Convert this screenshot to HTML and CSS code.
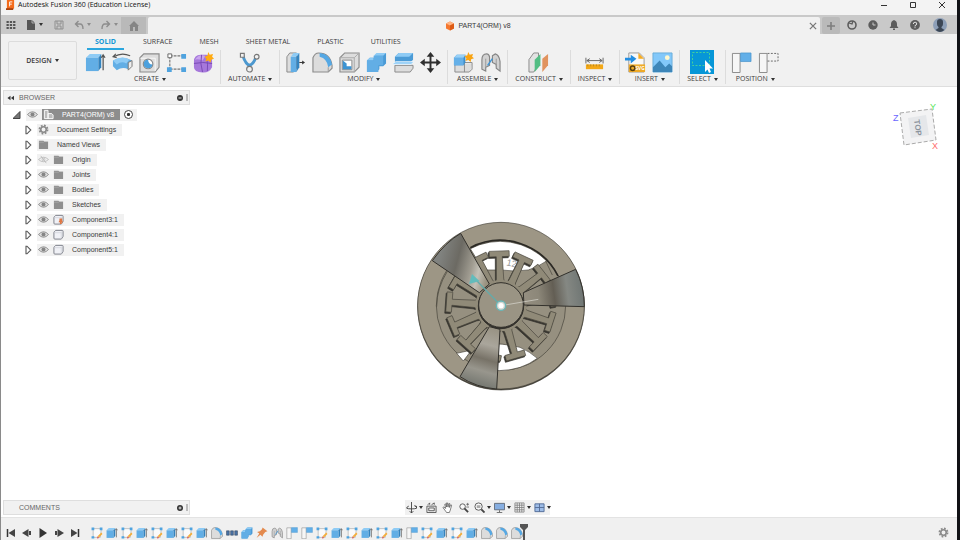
FILE: index.html
```
<!DOCTYPE html>
<html lang="en">
<head>
	<meta charset="utf-8">
	<title>Autodesk Fusion 360 (Education License)</title>
	<link rel="stylesheet" href="styles.css">
</head>
<body>
	<!-- shared icons -->
	<svg class="sprite" aria-hidden="true">
		<defs>
			<symbol id="i-extrude" viewBox="0 0 22 22">
				<path d="M1 6l4-4h12l-3 4z" fill="#8ecbf5"/><path d="M1 6h13v14H1z" fill="#62aee5"/><path d="M14 6l3-4v14l-3 4z" fill="#3484bf"/>
				<path d="M19 19V4M17 6l2-3 2 3" fill="none" stroke="#555" stroke-width="1.3"/>
			</symbol>
			<symbol id="i-revolve" viewBox="0 0 22 22">
				<path d="M1 9q10-6 20 0l-4 9q-6-3-12 1l-4-4z" fill="#62aee5"/><path d="M1 9q10-6 17-1l-3 4q-5-3-10 1z" fill="#8ecbf5"/>
				<path d="M17 11l4-2v6l-4 4z" fill="#eee" stroke="#777"/><path d="M2 5q8-5 17-1M4 2L1 5l4 1" fill="none" stroke="#555" stroke-width="1.2"/>
			</symbol>
			<symbol id="i-hole" viewBox="0 0 22 22">
				<path d="M1 6l4-4h16v14l-4 5H1z" fill="#ddd" stroke="#8b8b8b" stroke-width="1.2"/><path d="M1.500 6.500H17V20" fill="none" stroke="#fafafa"/>
				<circle cx="9.500" cy="12.500" r="5" fill="#fff" stroke="#888" stroke-width="1.200"/><path d="M9.500 8a4.500 4.500 0 1 0 4.500 5q-4 0-4.500-5z" fill="#4ba0dd"/>
			</symbol>
			<symbol id="i-pattern" viewBox="0 0 22 22">
				<path d="M4 4h14M4 4v14M4 18h14" stroke="#777" stroke-width="1.2" stroke-dasharray="3 1"/>
				<path d="M2 2h4v4H2z" fill="#fff" stroke="#666"/><path d="M16 2h5v5h-5zM1 16h5v5H1zM16 16h5v5h-5z" fill="#4fa3df"/>
			</symbol>
			<symbol id="i-form" viewBox="0 0 22 22">
				<path d="M1 10q0-7 7-7h6q6 1 6 7v6q-3 6-10 5.500Q1 21 1 16z" fill="#a678db"/><path d="M2 8q4-6 11-4l-3 5q-5-2-8-1z" fill="#c9a5ee"/>
				<path d="M1 12q9-2 19 0M9 3q-2 9 1 18M14 5q2 8 1 15" stroke="#7849b5" fill="none"/>
				<path d="M16 0l1.500 3 3.500-1-1 3 2 2-3 1-.5 3-2.500-2-3 1 1-3-2-2 3-1z" fill="#ffab12"/>
			</symbol>
			<symbol id="i-auto" viewBox="0 0 22 22">
				<path d="M4 4q3 9 7 10q5-2 7-10M11 12v6" fill="none" stroke="#4c98cf" stroke-width="3"/>
				<g fill="#f1f1f1" stroke="#777" stroke-width="1.200"><path d="M1.500 1.500h4v4h-4z"/><circle cx="18.500" cy="5" r="2.500"/><circle cx="11" cy="18" r="3"/></g>
			</symbol>
			<symbol id="i-press" viewBox="0 0 22 22">
				<path d="M2 5l3-4h7v16l-3 4H2z" fill="#ddd" stroke="#888"/><path d="M6 5h6v16H6z" fill="#62aee5"/><path d="M6 5l3-4h6l-3 4z" fill="#8ecbf5"/><path d="M12 5l3-4v15l-3 5z" fill="#3484bf"/>
				<path d="M15 11h4" stroke="#333"/><path d="M18 9l3 2-3 2z" fill="#333"/>
			</symbol>
			<symbol id="i-fillet" viewBox="0 0 22 22">
				<path d="M1 6q2-5 6-5 12 0 14 13v3l-4 4H1z" fill="#dcdcdc" stroke="#8b8b8b" stroke-width="1.200"/>
				<path d="M8 1q11 1 13 12l-4 3Q16 7 8 5z" fill="#55a8e4"/><path d="M17 16v5" stroke="#999"/>
			</symbol>
			<symbol id="i-shell" viewBox="0 0 22 22">
				<path d="M1 6l5-5h15v15l-5 5H1z" fill="#ddd" stroke="#8b8b8b" stroke-width="1.200"/><path d="M16 6v15M16 6l5-5M1 6h15" stroke="#aaa"/>
				<path d="M3.500 8.500h10v10h-10z" fill="#fff" stroke="#888"/><path d="M4 9l4 3v3h5v3H4z" fill="#3e94d2"/>
			</symbol>
			<symbol id="i-combine" viewBox="0 0 22 22">
				<path d="M1 9l3-3h5V4l3-3h9v11l-3 3h-4v3l-3 3H1z" fill="#4b9bd6"/><path d="M8 4l3-3h10l-3 3zM1 9l3-3h4v3z" fill="#8ecbf5"/><path d="M8 4h10v10h-5v7H1V9h7z" fill="#62aee5"/>
			</symbol>
			<symbol id="i-split" viewBox="0 0 22 22">
				<path d="M2 5l4-4h15v7l-3 3H2z" fill="#4b9bd6"/><path d="M2 5l4-4h15l-4 4z" fill="#8ecbf5"/><path d="M2 14h19v3l-3 4H2z" fill="#ddd" stroke="#888"/>
				<path d="M0 12l3-2h19l-3 3H0z" fill="#9bd2f8" stroke="#fff" stroke-width=".6"/>
			</symbol>
			<symbol id="i-move" viewBox="0 0 22 22">
				<path d="M11 3v16M3 11h16" stroke="#2f2f2f" stroke-width="2"/><path d="M11 0l4 5H7zM11 22l4-5H7zM0 11l5-4v8zM22 11l-5-4v8z" fill="#2f2f2f"/>
			</symbol>
			<symbol id="i-newcomp" viewBox="0 0 22 22">
				<path d="M2 12h18l-2 9H2z" fill="#ddd"/><path d="M2 12v9h15l3-3v-7h-8v10" stroke="#8b8b8b" fill="none"/>
				<path d="M1 6l3-3h9v8l-2 3H1z" fill="#3e8dca"/><path d="M1 6h10v8H1z" fill="#65b0e8"/><path d="M1 6l3-3h9l-2 3z" fill="#98d1f8"/>
				<path d="M16 0l1.500 3 3.500-1-1 3 2 1.500-3 1-.5 3-2.500-2-3 1 1-3-2-2 3-1z" fill="#f8a414"/>
			</symbol>
			<symbol id="i-joint" viewBox="0 0 22 22">
				<path d="M2 8q0-6 5-6 2 0 3 3v9l-4 2v4l-4-2zM13 4l3-2q4 1 5 8v10l-4-3v-4l-4-2z" fill="#d2d2d2" stroke="#858585" stroke-width="1.200"/>
				<path d="M6 7v9M17 7v8" stroke="#999"/><path d="M8 14l5-7" stroke="#3f97d8" stroke-width="1.500"/>
			</symbol>
			<symbol id="i-plane" viewBox="0 0 22 22">
				<path d="M1 8l5-7h5v12l-5 8H1z" fill="#e2e2e2" stroke="#888"/><path d="M7 8l6-6v12l-6 7z" fill="#52bd83"/><path d="M15 7l6-5v12l-6 7z" fill="#e1935e"/>
			</symbol>
			<symbol id="i-measure" viewBox="0 0 22 22">
				<path d="M2 6v6M20 6v6M3 9h16M6 7L3 9l3 2M16 7l3 2-3 2" fill="none" stroke="#666"/><path d="M2 13h18v5H2z" fill="#f3a817"/><path d="M4 13v2M7 13v2M10 13v2M13 13v2M16 13v2" stroke="#b98820"/>
			</symbol>
			<symbol id="i-svg" viewBox="0 0 22 22">
				<path d="M4 1h11l5 5v15H4z" fill="#f8f8f8" stroke="#999"/><path d="M14 1l6 6h-6z" fill="#f4ab22"/><path d="M4 13h17v8H4z" fill="#efaa28"/>
				<circle cx="8" cy="17" r="2.300" fill="none" stroke="#57400f" stroke-width="1.500"/><text x="11" y="19" font-size="5" font-weight="700" fill="#fff">SVG</text>
				<path d="M0 6h6V3l6 4-6 5V9H0z" fill="#238ee2"/>
			</symbol>
			<symbol id="i-image" viewBox="0 0 22 22">
				<path d="M1 1h20v20H1z" fill="#83c8fa" stroke="#69aeda"/><path d="M1 16l7-7 6 7 4-4 3 3v6H1z" fill="#3d86b9"/><circle cx="16" cy="6" r="2.500" fill="#fff8cf"/>
			</symbol>
			<symbol id="i-select" viewBox="0 0 24 24">
				<path d="M0 0h24v24H0z" fill="#0696d7"/><path d="M2.500 2.500h17v13h-17z" fill="none" stroke="#43cf9c" stroke-dasharray="2 1.500"/><path d="M15 10v12l2.500-2.500L19 23l2-1-1.500-3.500H23z" fill="#fff"/>
			</symbol>
			<symbol id="i-capture" viewBox="0 0 22 22">
				<path d="M1.500 1.500h8v20h-8z" fill="#f6f6f6" stroke="#888"/><path d="M10 1h11v9H10z" fill="#62afe8" stroke="#4592ca" stroke-width=".7"/>
			</symbol>
			<symbol id="i-revert" viewBox="0 0 22 22">
				<path d="M1.500 1.500h8v20h-8z" fill="#f6f6f6" stroke="#888"/><path d="M10 1.500h11v8H10" fill="none" stroke="#666" stroke-dasharray="2 1.500"/>
			</symbol>
			<symbol id="i-sketch" viewBox="0 0 22 22">
				<path d="M4 3h15l-2 16H4z" fill="#fafafa" stroke="#999"/><path d="M1 1h5v5H1zM16 1h5v5h-5zM1 17h5v4H1z" fill="#4fa3df"/>
				<path d="M12 17l7-7 2 3-6 6z" fill="#f5ae3a"/><path d="M12 17l3 3-4 1z" fill="#d95650"/>
			</symbol>
			<symbol id="i-rect" viewBox="0 0 22 22">
				<path d="M1 7h5v8H1zM8.500 7h5v8h-5zM16 7h5v8h-5z" fill="#4a73a5" stroke="#33445c"/>
			</symbol>
			<symbol id="i-pin" viewBox="0 0 22 22">
				<path d="M12 1l9 7-4 1-4 5-1 4-4-4-7 6 5-8-4-3 5-1 4-4z" fill="#e38a4e"/>
			</symbol>
			<symbol id="i-eye" viewBox="0 0 12 12">
				<path d="M.5 6Q6 0 11.500 6 6 12 .5 6z" fill="#e0e0e0" stroke="#8c8c8c"/><circle cx="6" cy="6" r="2.200" fill="#858585"/>
			</symbol>
			<symbol id="i-eyeoff" viewBox="0 0 12 12">
				<path d="M.5 6Q6 1 11.500 6 6 11 .5 6zM3 2l6 8" fill="none" stroke="#bdbdbd"/><circle cx="6" cy="6" r="1.500" fill="none" stroke="#bdbdbd"/>
			</symbol>
			<symbol id="i-folder" viewBox="0 0 12 12">
				<path d="M1 2h5l1 1h4v8H1z" fill="#8e8e8e"/><path d="M1 3.500h5l1-.7h4" stroke="#b9b9b9" stroke-width=".6" fill="none"/>
			</symbol>
			<symbol id="i-gear" viewBox="0 0 12 12">
				<circle cx="6" cy="6" r="4.400" fill="none" stroke="#8b8b8b" stroke-width="2" stroke-dasharray="1.900 1.550"/><circle cx="6" cy="6" r="3" fill="none" stroke="#8b8b8b" stroke-width="1.800"/>
			</symbol>
			<symbol id="i-box" viewBox="0 0 12 12">
				<path d="M1 4q0-1 2-2.500h7q1 0 1 1V8q-1 2-2 3H2q-1 0-1-1z" fill="#f0f1f6" stroke="#777b84"/><path d="M9 10.500V4l1.500-2M1.500 4H9" stroke="#c9cbd2" stroke-width=".7" fill="none"/>
			</symbol>
			<symbol id="i-arrow" viewBox="0 0 8 10">
				<path d="M2 1.200h1L6.800 5 3 8.800H2z" fill="#fff" stroke="#555" stroke-width="1.100"/>
			</symbol>
		</defs>
	</svg>

	<header class="titlebar">
		<svg class="app-logo" viewBox="0 0 10 12"><path d="M1 0h8v9l-1 1H1z" fill="#f36b1c"/><path d="M0 9h8v2H0z" fill="#a54210"/><path d="M4 7V2h3M4 4.500h2.500" stroke="#fff" fill="none"/></svg>
		<span class="app-name">Autodesk Fusion 360 (Education License)</span>
		<button class="win" aria-label="Minimize"><svg viewBox="0 0 8 8"><path d="M1 4.500h6" stroke="#333"/></svg></button>
		<button class="win" aria-label="Maximize"><svg viewBox="0 0 8 8"><path d="M1.500 1.500h5v5h-5z" fill="none" stroke="#333"/></svg></button>
		<button class="win" aria-label="Close"><svg viewBox="0 0 8 8"><path d="M1 1l6 6M7 1L1 7" stroke="#333"/></svg></button>
	</header>

	<div class="tabstrip">
		<div class="quick">
			<button aria-label="Data panel"><svg viewBox="0 0 10 10"><path d="M.5 2h9M.5 5h9M.5 8h9" stroke="#555" stroke-width="2" stroke-dasharray="2.300 1"/></svg></button>
			<button class="drop" aria-label="File"><svg viewBox="0 0 10 10"><path d="M1 0h5l3 3v7H1z" fill="#555"/><path d="M6 0v3h3" stroke="#ccc" stroke-width=".7" fill="none"/></svg></button>
			<button aria-label="Save"><svg viewBox="0 0 10 10"><path d="M1 1h8v8H1zM3 1v3h4V1M3 9V6h4v3" fill="none" stroke="#8f8f8f" stroke-width="1"/></svg></button>
			<button class="drop faded" aria-label="Undo"><svg viewBox="0 0 10 10"><path d="M2 4h4q3 0 3 5M4.500 1L1.500 4l3 3" fill="none" stroke="#8d8d8d" stroke-width="1.400"/></svg></button>
			<button class="drop faded" aria-label="Redo"><svg viewBox="0 0 10 10"><path d="M8 4H4Q1 4 1 9M5.500 1l3 3-3 3" fill="none" stroke="#8d8d8d" stroke-width="1.400"/></svg></button>
		</div>
		<button class="home" aria-label="Home"><svg viewBox="0 0 10 10"><path d="M5 0l5 5H9v5H6V6H4v4H1V5H0z" fill="#858585"/></svg></button>
		<div class="doc-tab">
			<span class="doc-name">
				<svg viewBox="0 0 10 10"><path d="M1 2.500L5 .5l4 2v5l-4 2-4-2z" fill="#f5772f"/><path d="M1 2.500L5 .5l4 2-4 2z" fill="#ffb585"/><path d="M5 4.500l4-2v5l-4 2z" fill="#dd5b16"/></svg>
				PART4(ORM) v8
			</span>
			<button class="close" aria-label="Close tab"><svg viewBox="0 0 8 8"><path d="M1.500 1.500l5 5M6.500 1.500l-5 5" stroke="#777"/></svg></button>
		</div>
		<button class="new-tab" aria-label="New tab"><svg viewBox="0 0 10 10"><path d="M5 1v8M1 5h8" stroke="#7d7d7d" stroke-width="1.600"/></svg></button>
		<div class="account">
			<button aria-label="Extensions"><svg viewBox="0 0 10 10"><circle cx="5" cy="5" r="4" fill="none" stroke="#5c5c5c" stroke-width="1.600"/><path d="M2 3l3 1 1-3" stroke="#5c5c5c" fill="none" stroke-width="1.300"/></svg></button>
			<button aria-label="Job status"><svg viewBox="0 0 10 10"><circle cx="5" cy="5" r="4.700" fill="#5c5c5c"/><path d="M5 2.500V5h2.500" stroke="#ccc" fill="none"/></svg></button>
			<button aria-label="Notifications"><svg viewBox="0 0 10 10"><path d="M5 0q3 1 3 4v2l1.500 2h-9L2 6V4q0-3 3-4zM4 8.500h2V10H4z" fill="#5c5c5c"/></svg></button>
			<button aria-label="Help"><svg viewBox="0 0 10 10"><circle cx="5" cy="5" r="4.900" fill="#5c5c5c"/><path d="M3.300 4q0-1.800 1.800-1.800T6.700 4Q6.700 5 5 5.600V6.500M5 7.200v1" stroke="#e4e4e4" fill="none"/></svg></button>
			<button class="avatar" aria-label="Profile"><svg viewBox="0 0 14 14"><circle cx="7" cy="7" r="7" fill="#8d9fb8"/><path d="M4 4q0-3 3-3t3 3v2q0 2-1.500 3v1l3 2Q9 14 7 14t-4.500-2l3-2V9Q4 8 4 6z" fill="#3c4756"/></svg></button>
		</div>
	</div>

	<div class="ribbon">
		<button class="workspace caret">DESIGN</button>
		<div class="ribbon-main">
			<nav class="ribbon-tabs">
				<button class="active">SOLID</button>
				<button>SURFACE</button>
				<button>MESH</button>
				<button>SHEET METAL</button>
				<button>PLASTIC</button>
				<button>UTILITIES</button>
			</nav>
			<div class="groups">
				<section class="group">
					<div class="tools">
						<button aria-label="Extrude"><svg><use href="#i-extrude"/></svg></button>
						<button aria-label="Revolve"><svg><use href="#i-revolve"/></svg></button>
						<button aria-label="Hole"><svg><use href="#i-hole"/></svg></button>
						<button aria-label="Pattern"><svg><use href="#i-pattern"/></svg></button>
						<button aria-label="Create form"><svg><use href="#i-form"/></svg></button>
					</div>
					<button class="group-name caret">CREATE</button>
				</section>
				<section class="group">
					<div class="tools">
						<button aria-label="Automated modeling"><svg><use href="#i-auto"/></svg></button>
					</div>
					<button class="group-name caret">AUTOMATE</button>
				</section>
				<section class="group">
					<div class="tools">
						<button aria-label="Press pull"><svg><use href="#i-press"/></svg></button>
						<button aria-label="Fillet"><svg><use href="#i-fillet"/></svg></button>
						<button aria-label="Shell"><svg><use href="#i-shell"/></svg></button>
						<button aria-label="Combine"><svg><use href="#i-combine"/></svg></button>
						<button aria-label="Split body"><svg><use href="#i-split"/></svg></button>
						<button aria-label="Move"><svg><use href="#i-move"/></svg></button>
					</div>
					<button class="group-name caret">MODIFY</button>
				</section>
				<section class="group">
					<div class="tools">
						<button aria-label="New component"><svg><use href="#i-newcomp"/></svg></button>
						<button aria-label="Joint"><svg><use href="#i-joint"/></svg></button>
					</div>
					<button class="group-name caret">ASSEMBLE</button>
				</section>
				<section class="group">
					<div class="tools">
						<button aria-label="Offset plane"><svg><use href="#i-plane"/></svg></button>
					</div>
					<button class="group-name caret">CONSTRUCT</button>
				</section>
				<section class="group">
					<div class="tools">
						<button aria-label="Measure"><svg><use href="#i-measure"/></svg></button>
					</div>
					<button class="group-name caret">INSPECT</button>
				</section>
				<section class="group">
					<div class="tools">
						<button aria-label="Insert SVG"><svg><use href="#i-svg"/></svg></button>
						<button aria-label="Canvas"><svg><use href="#i-image"/></svg></button>
					</div>
					<button class="group-name caret">INSERT</button>
				</section>
				<section class="group">
					<div class="tools">
						<button class="selected" aria-label="Select"><svg><use href="#i-select"/></svg></button>
					</div>
					<button class="group-name caret">SELECT</button>
				</section>
				<section class="group">
					<div class="tools">
						<button aria-label="Capture position"><svg><use href="#i-capture"/></svg></button>
						<button aria-label="Revert position"><svg><use href="#i-revert"/></svg></button>
					</div>
					<button class="group-name caret">POSITION</button>
				</section>
			</div>
		</div>
	</div>

	<main class="canvas">
		<aside class="browser">
			<div class="panel-head">
				<svg class="collapse" viewBox="0 0 8 8"><path d="M4 1.500v5L.5 4zM8 1.500v5L4.500 4z" fill="#333"/></svg>
				<span>BROWSER</span>
				<svg class="dot" viewBox="0 0 8 8"><circle cx="4" cy="4" r="3" fill="#333"/><path d="M2.500 4h3" stroke="#fff" stroke-width=".8"/></svg>
				<i class="grip"></i>
			</div>
			<ul class="tree">
				<li class="root">
					<button class="toggle" aria-label="Collapse"><svg viewBox="0 0 8 10"><path d="M7 1.500v7H0z" fill="#777" stroke="#444"/></svg></button>
					<div class="node">
						<svg><use href="#i-eye"/></svg>
						<span class="current">
							<svg viewBox="0 0 12 12"><path d="M1.500 1.500h4v9h-4zM5.500 5h4l1.500 1.500v4H5.500z" fill="#bbb" stroke="#fff"/></svg>
							PART4(ORM) v8
						</span>
						<input type="radio" checked aria-label="Activate PART4(ORM) v8">
					</div>
				</li>
				<li><button class="toggle" aria-label="Expand"><svg><use href="#i-arrow"/></svg></button><div class="node"><svg><use href="#i-gear"/></svg><span>Document Settings</span></div></li>
				<li><button class="toggle" aria-label="Expand"><svg><use href="#i-arrow"/></svg></button><div class="node"><svg><use href="#i-folder"/></svg><span>Named Views</span></div></li>
				<li><button class="toggle" aria-label="Expand"><svg><use href="#i-arrow"/></svg></button><div class="node"><svg><use href="#i-eyeoff"/></svg><svg><use href="#i-folder"/></svg><span>Origin</span></div></li>
				<li><button class="toggle" aria-label="Expand"><svg><use href="#i-arrow"/></svg></button><div class="node"><svg><use href="#i-eye"/></svg><svg><use href="#i-folder"/></svg><span>Joints</span></div></li>
				<li><button class="toggle" aria-label="Expand"><svg><use href="#i-arrow"/></svg></button><div class="node"><svg><use href="#i-eye"/></svg><svg><use href="#i-folder"/></svg><span>Bodies</span></div></li>
				<li><button class="toggle" aria-label="Expand"><svg><use href="#i-arrow"/></svg></button><div class="node"><svg><use href="#i-eye"/></svg><svg><use href="#i-folder"/></svg><span>Sketches</span></div></li>
				<li><button class="toggle" aria-label="Expand"><svg><use href="#i-arrow"/></svg></button><div class="node"><svg><use href="#i-eye"/></svg><svg viewBox="0 0 12 12"><use href="#i-box"/><path d="M7 5h3v2l1 2H9.500v2h-2V9H6l1-2z" fill="#df7743"/></svg><span>Component3:1</span></div></li>
				<li><button class="toggle" aria-label="Expand"><svg><use href="#i-arrow"/></svg></button><div class="node"><svg><use href="#i-eye"/></svg><svg><use href="#i-box"/></svg><span>Component4:1</span></div></li>
				<li><button class="toggle" aria-label="Expand"><svg><use href="#i-arrow"/></svg></button><div class="node"><svg><use href="#i-eye"/></svg><svg><use href="#i-box"/></svg><span>Component5:1</span></div></li>
			</ul>
		</aside>

		<svg class="model" viewBox="0 0 600 570">
			<defs>
				<linearGradient id="blade1" gradientUnits="userSpaceOnUse" x1="115" y1="155" x2="265" y2="195">
					<stop offset="0" stop-color="#80827f"/><stop offset=".35" stop-color="#6c6a63"/><stop offset=".65" stop-color="#a09c91"/><stop offset=".8" stop-color="#c4c1b7"/><stop offset="1" stop-color="#98917f"/>
				</linearGradient>
				<linearGradient id="blade2" gradientUnits="userSpaceOnUse" x1="370" y1="260" x2="553" y2="235">
					<stop offset="0" stop-color="#958f81"/><stop offset=".25" stop-color="#8c8779"/><stop offset=".5" stop-color="#635e54"/><stop offset=".72" stop-color="#858883"/><stop offset="1" stop-color="#6d7472"/>
				</linearGradient>
				<linearGradient id="blade3" gradientUnits="userSpaceOnUse" x1="285" y1="355" x2="235" y2="525">
					<stop offset="0" stop-color="#989283"/><stop offset=".3" stop-color="#aaa69c"/><stop offset=".55" stop-color="#777267"/><stop offset=".75" stop-color="#98968d"/><stop offset="1" stop-color="#777972"/>
				</linearGradient>
				<path id="tooth" d="M-18 -66Q-12 -70 -11 -80L-9 -147H-30V-164H30V-147H9L11 -80Q12 -70 18 -66z"/>
				<g id="teeth">
					<use href="#tooth" transform="rotate(-26)"/>
					<use href="#tooth" transform="rotate(-2)"/>
					<use href="#tooth" transform="rotate(25)"/>
					<use href="#tooth" transform="rotate(52)"/>
					<use href="#tooth" transform="rotate(80)"/>
					<use href="#tooth" transform="rotate(108)"/>
					<use href="#tooth" transform="rotate(134)"/>
					<use href="#tooth" transform="rotate(164)"/>
					<use href="#tooth" transform="rotate(191)"/>
					<use href="#tooth" transform="rotate(222)"/>
					<use href="#tooth" transform="rotate(247)"/>
					<use href="#tooth" transform="rotate(274)"/>
					<use href="#tooth" transform="rotate(300)"/>
				</g>
			</defs>
			<g stroke="#45423a" stroke-width="2" stroke-linejoin="round">
				<circle cx="303" cy="290" r="250" fill="#37352f"/>
				<circle cx="303" cy="287" r="250" fill="#9d9685"/>
				<circle cx="303" cy="287" r="194" fill="#969080"/>
				<path d="M211 116A194 194 0 0 1 440 153Q412 172 385 180Q345 186 303 180L250 180zM170 430L190 453 215 420zM240 470L297 482Q365 481 412 445Q390 425 360 412Q303 398 260 402z" fill="#fff"/>
				<path d="M211 113A194 194 0 0 1 474 198" fill="none" stroke="#2b2924" stroke-width="5"/>
				<path d="M437 153l20 42M110 290q0-55 32-106" fill="none"/>
			</g>
			<text x="318" y="166" transform="rotate(12 318 166)" font-size="28" fill="#999">12</text>
			<g stroke-linejoin="round">
				<use href="#teeth" transform="translate(300 291)" fill="#36342e" stroke="#36342e" stroke-width="2"/>
				<use href="#teeth" transform="translate(303 287)" fill="#908a78" stroke="#4a473e" stroke-width="2"/>
			</g>
			<circle cx="303" cy="287" r="77" fill="#908a78"/>
			<g stroke="#33312c" stroke-width="3" stroke-linejoin="round">
				<path d="M182 70Q136 97 97 152L238 248 268 222z" fill="url(#blade1)"/>
				<path d="M527 178Q553 230 553 290L372 285 370 248z" fill="url(#blade2)"/>
				<path d="M180 500Q230 533 290 537L300 358 268 350z" fill="url(#blade3)"/>
				<circle cx="303" cy="288" r="68" fill="#302e29"/>
				<circle cx="303" cy="285" r="67" fill="#9a9484"/>
			</g>
			<path d="M303 287L226 208" stroke="#65aaa9" stroke-width="4"/><path d="M216 193l22 20-30 8z" fill="#62bcbc" stroke="#62bcbc"/>
			<path d="M315 285l100-17" stroke="#dedcd5" stroke-width="2"/>
			<circle cx="303" cy="287" r="14" fill="#d5d5d0" stroke="#69b5b6" stroke-width="4"/>
			<circle cx="303" cy="287" r="8" fill="#fff"/>
		</svg>

		<svg class="viewcube" viewBox="0 0 50 50">
			<path d="M10 12l32-4 4 31-32 5z" fill="#f3f3f4" stroke="#aaa" stroke-dasharray="4 2"/>
			<path d="M18 17l18-3 3 20-18 3z" fill="#e5e7ea"/>
			<text x="24" y="19" transform="rotate(82 24 19)" font-size="8" font-weight="700" fill="#8a929c">TOP</text>
			<text x="3" y="20" font-size="9" fill="#6a66ff">Z</text><text x="40" y="9" font-size="9" fill="#58e65c">Y</text><text x="42" y="48" font-size="9" fill="#ff6c6c">X</text>
		</svg>

		<div class="canvas-foot">
			<div class="panel-head comments">
				<span>COMMENTS</span>
				<svg class="dot" viewBox="0 0 8 8"><circle cx="4" cy="4" r="3" fill="#333"/><path d="M2.500 4h3M4 2.500v3" stroke="#fff" stroke-width=".8"/></svg>
				<i class="grip"></i>
			</div>
			<div class="navbar">
				<button class="drop" aria-label="Orbit"><svg viewBox="0 0 12 12"><path d="M6 0v12M3 4.500q-6 3 3 3t4-3M4 10l2 2 2-2M9 4l3 1-1 2" fill="none" stroke="#444"/></svg></button>
				<button aria-label="Look at"><svg viewBox="0 0 12 12"><path d="M1 4.500h10v7H1zM3 6.500h6v3H3zM2 3l2-2v2M6 3l3-2v2" fill="none" stroke="#555"/></svg></button>
				<button aria-label="Pan"><svg viewBox="0 0 12 12"><path d="M4 10L1 6l1-.5 2 1.500L3 2.500l1-.5 1 3.500V1h1l.5 4.500L7.500 1.500l1 .3L8 6l1.500-3 1 .5L9 9l-1 2.500H5z" fill="#fff" stroke="#555" stroke-width=".8"/></svg></button>
				<button aria-label="Zoom"><svg viewBox="0 0 12 12"><circle cx="5" cy="5" r="3" fill="#f8f8f8" stroke="#555"/><path d="M7 7l4 4" stroke="#444" stroke-width="2"/><path d="M9 2.500h3M10.500 1v3M9 5.500h3" stroke="#555" stroke-width=".8"/></svg></button>
				<button class="drop" aria-label="Fit"><svg viewBox="0 0 12 12"><circle cx="5" cy="5" r="4" fill="#f8f8f8" stroke="#555"/><path d="M3 3.500h4v3H3z" fill="#aaa"/><path d="M8 8l3.500 3.500" stroke="#444" stroke-width="2"/></svg></button>
				<button class="drop" aria-label="Display settings"><svg viewBox="0 0 12 12"><path d="M.5 1.500h11v7H.5z" fill="#86aee1" stroke="#5f6978"/><path d="M6 9v2M3 11.500h6" stroke="#666"/></svg></button>
				<button class="drop" aria-label="Grid"><svg viewBox="0 0 12 12"><path d="M1 1h10v10H1zM1 3.500h10M1 6h10M1 8.500h10M3.500 1v10M6 1v10M8.500 1v10" fill="none" stroke="#777" stroke-width=".8"/></svg></button>
				<button class="drop" aria-label="Viewports"><svg viewBox="0 0 12 12"><path d="M1 2h10v8.500H1zM6 2v8.500M1 6h10" fill="#9dbce7" stroke="#526b96"/></svg></button>
			</div>
		</div>
	</main>

	<footer class="timeline">
		<div class="playback">
			<button aria-label="Start"><svg viewBox="0 0 10 10"><path d="M1.500 1v8" stroke="#333" stroke-width="1.500"/><path d="M9 1v8L2.500 5z" fill="#444"/></svg></button>
			<button aria-label="Step back"><svg viewBox="0 0 10 10"><path d="M6.500 1v8L0 5zM7 3h2v4H7z" fill="#444"/></svg></button>
			<button aria-label="Play"><svg viewBox="0 0 10 10"><path d="M1.500 0L9 5l-7.500 5z" fill="#333"/></svg></button>
			<button aria-label="Step forward"><svg viewBox="0 0 10 10"><path d="M3.500 1v8L10 5zM1 3h2v4H1z" fill="#444"/></svg></button>
			<button aria-label="End"><svg viewBox="0 0 10 10"><path d="M8.500 1v8" stroke="#333" stroke-width="1.500"/><path d="M1 1v8l6.500-4z" fill="#444"/></svg></button>
		</div>
		<div class="features" id="features"></div>
		<svg class="marker" viewBox="0 0 8 16"><path d="M0 0h8v3L5 6v10H3V6L0 3z" fill="#555"/></svg>
		<button class="settings" aria-label="Timeline settings"><svg><use href="#i-gear"/></svg></button>
	</footer>
	<script src="timeline.js"></script>
</body>
</html>
```
FILE: styles.css
```
* {
	box-sizing: border-box;
}

body {
	margin: 0;
	min-height: 100vh;
	display: flex;
	flex-direction: column;
	border-left: 1px solid #8a8a8a;
	border-right: 3px solid #111216;
	background: #fff;
	color: #3a3a3a;
	font-family: "Open Sans", "Noto Sans", sans-serif;
	font-size: 7px;
	line-height: 10px;
}

button {
	display: flex;
	align-items: center;
	justify-content: center;
	margin: 0;
	padding: 0;
	border: 0;
	background: none;
	color: inherit;
	font: inherit;
}

svg {
	display: block;
	flex: none;
}

.sprite {
	position: absolute;
	width: 0;
	height: 0;
}

/* small triangle after menus */
.caret::after,
.drop::after {
	content: "";
	margin-left: 3px;
	border: 2px solid transparent;
	border-top: 3px solid #333;
	border-bottom: 0;
}

.faded::after {
	border-top-color: #8d8d8d;
}

/* title bar */
.titlebar {
	display: flex;
	align-items: center;
	height: 15px;
	padding: 0 11px 5px 5px;
	background: #f3f3f3;
	color: #111;
}

.app-logo {
	width: 9px;
	height: 11px;
	margin-right: 3px;
}

.app-name {
	flex: 1;
}

.win {
	margin-left: 21px;
}

.win svg,
.close svg {
	width: 8px;
	height: 8px;
}

/* document tabs */
.tabstrip {
	display: flex;
	height: 19px;
	padding-top: 2px;
	background: #c9c9c9;
}

.tabstrip svg {
	width: 10px;
	height: 10px;
}

.quick {
	display: flex;
	justify-content: space-between;
	width: 120px;
	padding: 0 3px 2px 5px;
}

.home {
	width: 25px;
	margin-right: 2px;
	background: #b9b9b9;
}

.doc-tab {
	flex: 1;
	display: flex;
	align-items: center;
	padding-right: 2px;
	border-radius: 2px 2px 0 0;
	background: #f1f1f1;
	font-family: "Liberation Sans", Arial, sans-serif;
}

.doc-name {
	flex: 1;
	display: flex;
	justify-content: center;
	gap: 3px;
}

.new-tab {
	width: 18px;
	margin-left: 2px;
	border-radius: 2px;
	background: #bababa;
}

.account {
	display: flex;
	gap: 11px;
	padding: 0 10px 2px 7px;
}

.account .avatar {
	margin-left: 2px;
}

.account .avatar svg {
	width: 14px;
	height: 14px;
}

/* ribbon */
.ribbon {
	display: flex;
	height: 53px;
	border-bottom: 1px solid #dedede;
	background: #f1f1f1;
}

.workspace {
	width: 69px;
	height: 39px;
	margin: 7px 2px 0 7px;
	border: 1px solid #dcdcdc;
	border-radius: 2px;
	font-weight: 600;
}

.ribbon-tabs {
	display: flex;
	gap: 11px;
	padding: 2px 0 0 8px;
}

.ribbon-tabs button {
	height: 14px;
	padding: 0 8px;
	border-bottom: 2px solid transparent;
}

.ribbon-tabs .active {
	border-color: #2ba6de;
	color: #1597d5;
	font-weight: 700;
}

.groups {
	display: flex;
}

.group {
	display: flex;
	flex-direction: column;
	align-items: center;
	height: 34px;
	border-left: 1px solid #dcdcdc;
}

.group:first-child {
	border-color: transparent;
}

.tools {
	display: flex;
	gap: 6px;
	height: 24px;
	padding: 0 6px 0 5px;
}

.tools svg {
	width: 21px;
	height: 21px;
}

.tools .selected svg {
	width: 24px;
	height: 24px;
}

.group-name {
	padding: 0 7px;
}

/* canvas */
.canvas {
	position: relative;
	flex: 1;
	display: flex;
	flex-direction: column;
	justify-content: space-between;
	padding: 3px 0 2px 2px;
	font-family: "Liberation Sans", Arial, sans-serif;
}

.browser {
	width: 187px;
}

.panel-head {
	display: flex;
	align-items: center;
	height: 15px;
	padding: 0 1px 0 3px;
	border: 1px solid #dedede;
	background: #f1f1f1;
	color: #666;
}

.panel-head span {
	flex: 1;
}

.collapse {
	width: 7px;
	height: 8px;
	margin-right: 5px;
}

.dot {
	width: 8px;
	height: 8px;
	margin-right: 2px;
}

.grip {
	width: 2px;
	height: 7px;
	background: #bbb;
}

.tree {
	margin: 2px 0 0;
	padding: 0;
	list-style: none;
}

.tree li {
	display: flex;
	align-items: center;
	height: 15px;
	padding-left: 21px;
}

.tree .root {
	padding-left: 10px;
}

.toggle svg {
	width: 8px;
	height: 10px;
}

.toggle {
	margin-right: 5px;
}

.node {
	display: flex;
	align-items: center;
	gap: 4px;
	height: 12px;
	padding: 0 6px 0 1px;
	background: #f1f1f1;
}

.node svg {
	width: 11px;
	height: 11px;
}

.node > span {
	margin-left: 4px;
}

.root .node {
	padding-right: 4px;
}

.node .current {
	display: flex;
	align-items: center;
	gap: 8px;
	height: 11px;
	margin-left: 0;
	padding: 0 6px 0 1px;
	background: #8d8d8d;
	color: #fff;
}

.node input {
	appearance: none;
	width: 9px;
	height: 9px;
	margin: 0;
	border: 1px solid #444;
	border-radius: 50%;
	background: radial-gradient(#333 25%, #fff 40%);
}

/* free canvas: model and view cube */
.model {
	position: absolute;
	left: 399px;
	top: 123px;
	width: 200px;
	height: 190px;
}

.viewcube {
	position: absolute;
	right: 17px;
	top: 14px;
	width: 50px;
	height: 50px;
}

.canvas-foot {
	display: grid;
	grid-template-columns: 1fr auto 1fr;
}

.comments {
	width: 187px;
	padding-left: 15px;
}

.navbar {
	display: flex;
	align-items: center;
	gap: 5px;
	margin-right: 6px;
	padding: 0 1px;
	background: #f1f1f1;
}

.navbar svg {
	width: 11px;
	height: 11px;
}

.navbar .drop::after {
	margin-left: 2px;
}

.navbar .drop {
	margin-right: -2px;
}

/* timeline */
.timeline {
	display: flex;
	height: 23px;
	padding: 6px 8px 0 5px;
	border-top: 1px solid #e3e3e3;
	background: #f0f0f0;
}

.playback {
	display: flex;
	gap: 6px;
	margin-right: 11px;
}

.playback button,
.features button,
.settings {
	padding-top: 1px;
}

.playback svg {
	width: 10px;
	height: 10px;
}

.features {
	display: flex;
	gap: 3px;
}

.features svg {
	width: 12px;
	height: 12px;
}

.marker {
	align-self: flex-start;
	width: 8px;
	height: 16px;
	margin-left: -3px;
}

.settings {
	margin-left: auto;
}

.settings svg {
	width: 11px;
	height: 11px;
}
```
FILE: timeline.js
```
var features = [
	"sketch", "extrude", "sketch", "extrude", "sketch", "extrude", "sketch", "extrude",
	"fillet", "rect", "combine", "pin", "joint", "capture", "capture",
	"sketch", "extrude", "sketch", "extrude", "sketch", "extrude", "capture",
	"sketch", "extrude", "sketch", "extrude", "fillet", "fillet", "fillet"
];

var html = "";
for (var i = 0; i < features.length; i++) {
	html += '<button aria-label="' + features[i] + '"><svg><use href="#i-' + features[i] + '"/></svg></button>';
}
document.getElementById("features").innerHTML = html;
```
